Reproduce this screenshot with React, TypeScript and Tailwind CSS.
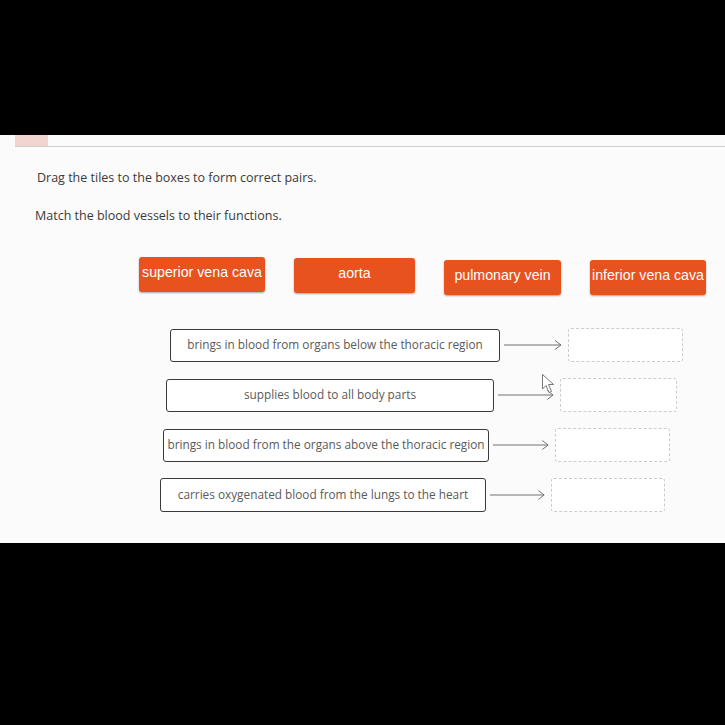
import React from 'react';

type Tile = { label: string; w: string; mt: string };
type Row = { text: string; ml: string; boxW: string; arrowW: string; targetW: string; h: string };

const tiles: Tile[] = [
  { label: 'superior vena cava', w: 'w-[126px]', mt: 'mt-0' },
  { label: 'aorta', w: 'w-[121px]', mt: 'mt-[1px]' },
  { label: 'pulmonary vein', w: 'w-[117px]', mt: 'mt-[3px]' },
  { label: 'inferior vena cava', w: 'w-[116px]', mt: 'mt-[3px]' },
];

const rows: Row[] = [
  { text: 'brings in blood from organs below the thoracic region', ml: 'ml-[170px]', boxW: 'w-[330px]', arrowW: 'w-[60px]', targetW: 'w-[115px]', h: 'h-[33px]' },
  { text: 'supplies blood to all body parts', ml: 'ml-[166px]', boxW: 'w-[328px]', arrowW: 'w-[58px]', targetW: 'w-[117px]', h: 'h-[33px]' },
  { text: 'brings in blood from the organs above the thoracic region', ml: 'ml-[163px]', boxW: 'w-[326px]', arrowW: 'w-[58px]', targetW: 'w-[115px]', h: 'h-[33px]' },
  { text: 'carries oxygenated blood from the lungs to the heart', ml: 'ml-[160px]', boxW: 'w-[326px]', arrowW: 'w-[57px]', targetW: 'w-[114px]', h: 'h-[34px]' },
];

const Arrow: React.FC<{ className?: string }> = ({ className }) => (
  <svg className={className} height="12" viewBox="0 0 60 12" preserveAspectRatio="none">
    <line x1="1" y1="6" x2="58" y2="6" stroke="#707070" strokeWidth="1" />
    <polyline points="52,1.5 58,6 52,10.5" fill="none" stroke="#707070" strokeWidth="1" />
  </svg>
);

const Cursor: React.FC = () => (
  <svg className="absolute left-[541px] top-[238px]" width="16" height="22" viewBox="0 0 16 22">
    <path d="M1.5 1.5 L1.5 16 L5 12.5 L8 19.5 L10.5 18.5 L7.5 11.5 L12.5 11.5 Z" fill="#fff" stroke="#777" strokeWidth="1" strokeLinejoin="round" />
  </svg>
);

export default function App() {
  return (
    <div className="w-[725px] h-[725px] bg-black flex flex-col overflow-hidden font-['Open_Sans',sans-serif]">
      <div className="h-[135px] shrink-0" />

      <section className="relative h-[408px] shrink-0 bg-[#fbfbfb]">
        <div className="ml-[15px] w-[33px] h-[11px] bg-[#f2d4d1]" />
        <div className="ml-[15px] border-t border-[#cfcfcf]" />

        <p className="ml-[37px] mt-[21px] text-[12.5px] leading-[20px] text-[#3a3a3a]">
          Drag the tiles to the boxes to form correct pairs.
        </p>
        <p className="ml-[35px] mt-[18px] text-[12.5px] leading-[20px] text-[#3a3a3a]">
          Match the blood vessels to their functions.
        </p>

        <div className="ml-[139px] mt-[31px] flex items-start gap-[29px]">
          {tiles.map((t) => (
            <div
              key={t.label}
              className={`${t.w} ${t.mt} h-[35px] rounded-[3px] bg-[#e8521f] shadow-[0_1px_2px_rgba(0,0,0,0.35)] flex items-start justify-center pt-[5px] font-['Liberation_Sans',Arial,sans-serif] text-[14.2px] text-white`}
            >
              {t.label}
            </div>
          ))}
        </div>

        <div className="mt-[33px] flex flex-col gap-[16px]">
          {rows.map((r) => (
            <div key={r.text} className={`${r.ml} flex items-center`}>
              <div
                className={`${r.boxW} ${r.h} rounded-[3px] border-[1.5px] border-[#3a3a3a] bg-white flex items-center justify-center text-[11.8px] text-[#5a5a5a]`}
              >
                {r.text}
              </div>
              <Arrow className={`${r.arrowW} ml-[3px]`} />
              <div
                className={`${r.targetW} h-[34px] ml-[5px] rounded-[3px] border border-dashed border-[#cccccc] bg-white`}
              />
            </div>
          ))}
        </div>

        <Cursor />
      </section>

      <div className="flex-1" />
    </div>
  );
}
